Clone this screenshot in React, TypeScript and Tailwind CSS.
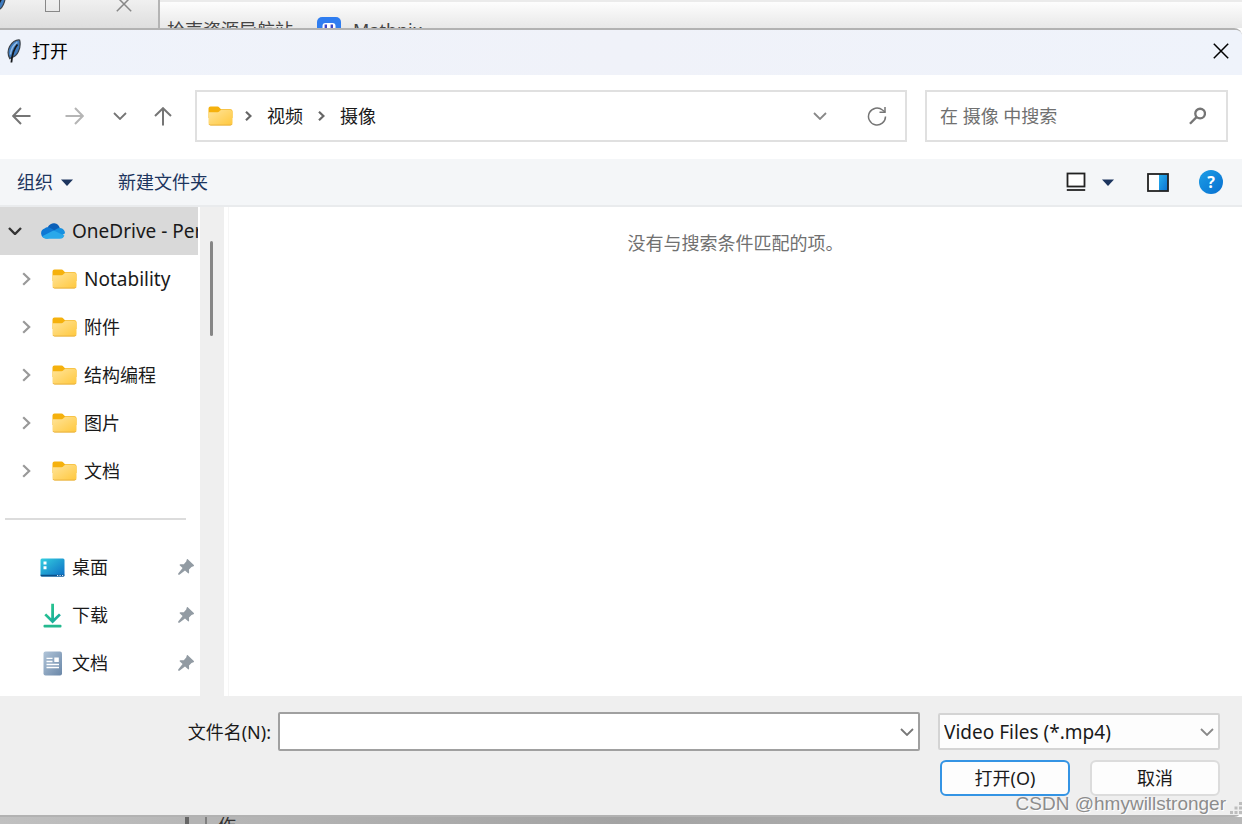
import React from 'react';

type IconProps = { className?: string };

const Feather: React.FC<IconProps> = ({ className = '' }) => (
  <svg width="14" height="24" viewBox="0 0 14 24" className={className} aria-hidden="true">
    <path
      d="M12.600 1C9 .6 5 3.600 2.600 7.500 .6 11.500.8 16 2.800 19.600L4.600 18.600c3-.6 5.400-2.800 6.800-6C13 9 13.600 4.500 12.600 1z"
      fill="#3f7cc0"
      stroke="#3a4048"
      strokeWidth="1.200"
    />
    <path d="M10.300 3.200C6.500 6 4 10.500 3.400 15.500" fill="none" stroke="#8fb9e4" strokeWidth="1.500" />
    <path d="M10.500 5.500C7.500 9 5.200 14 4.400 23.500" fill="none" stroke="#15181c" strokeWidth="1.800" />
  </svg>
);

const Cross: React.FC<IconProps> = ({ className = '' }) => (
  <svg width="16" height="16" viewBox="0 0 16 16" className={className} aria-hidden="true">
    <path d="M.8.8l14.400 14.400M15.200.8L.8 15.200" fill="none" stroke="currentColor" strokeWidth="1.500" />
  </svg>
);

const ChevronDown: React.FC<IconProps & { strokeWidth?: number }> = ({ className = '', strokeWidth = 1.8 }) => (
  <svg width="14" height="8" viewBox="0 0 14 8" className={className} aria-hidden="true">
    <path d="M1 1l6 6 6-6" fill="none" stroke="currentColor" strokeWidth={strokeWidth} />
  </svg>
);

const ChevronRight: React.FC<IconProps> = ({ className = '' }) => (
  <svg width="9" height="14" viewBox="0 0 9 14" className={className} aria-hidden="true">
    <path d="M1.200 1.200L7.200 7l-6 5.800" fill="none" stroke="currentColor" strokeWidth="2.200" />
  </svg>
);

const CrumbArrow: React.FC<IconProps> = ({ className = '' }) => (
  <svg width="7" height="10" viewBox="0 0 7 10" className={className} aria-hidden="true">
    <path d="M1 .8L5.400 5 1 9.200" fill="none" stroke="#666" strokeWidth="2.200" />
  </svg>
);

const Caret: React.FC = () => (
  <svg width="12" height="7" viewBox="0 0 12 7" aria-hidden="true">
    <path d="M0 .5h12L6 7z" fill="#1c355e" />
  </svg>
);

const Folder: React.FC<IconProps> = ({ className = '' }) => (
  <svg width="25" height="20" viewBox="0 0 25 20" className={className} aria-hidden="true">
    <defs>
      <linearGradient id="folderFront" x1="0" y1="0" x2="1" y2="1">
        <stop offset="0" stopColor="#ffe49a" />
        <stop offset="1" stopColor="#ffc83d" />
      </linearGradient>
    </defs>
    <path d="M.5 2.500a2 2 0 012-2H9.500c.8 0 1.300.3 1.800.9L13 3.200h9.500a2 2 0 012 2V12H.5z" fill="#f5b10d" />
    <path
      d="M.5 6.200h9c.8 0 1.200-.3 1.700-.8l.8-.8c.4-.4.8-.6 1.400-.6h9.100a2 2 0 012 2v11.200a2 2 0 01-2 2h-20a2 2 0 01-2-2z"
      fill="url(#folderFront)"
    />
    <path d="M1 18.200a2 2 0 001.500.9h20a2 2 0 001.500-.9" fill="none" stroke="#e8b03c" strokeWidth="1" />
  </svg>
);

const Cloud: React.FC = () => (
  <svg width="24" height="16" viewBox="0 0 24 16" aria-hidden="true">
    <path d="M6.500 4.500C8.500.8 11.500 0 13.500.3c2.700.4 4.600 2.200 5.300 4.600L14.500 9z" fill="#0a5fb8" />
    <path d="M5.200 15.500A5.200 5.200 0 013.600 5.400C5 4.200 7.400 3.800 9.400 4.900L17 9.500 7 15.500z" fill="#0f78d4" />
    <path d="M11.500 8.500l4-2.600c1-.7 2.300-1.100 3.600-1 2.800.3 4.900 2.500 4.900 5.300L20 13z" fill="#1690e0" />
    <path d="M1.200 13.300L11.500 8c.8-.4 1.500-.4 2.300 0l9.600 4.400c-.6 2-2.200 3.300-4.400 3.300H5.200c-1.700 0-3.200-1-4-2.400z" fill="#29a8ea" />
  </svg>
);

const Desktop: React.FC = () => (
  <svg width="25" height="19" viewBox="0 0 25 19" aria-hidden="true">
    <defs>
      <linearGradient id="desk" x1="0" y1="0" x2="1" y2="1">
        <stop offset="0" stopColor="#34cfe0" />
        <stop offset="1" stopColor="#0c6cc4" />
      </linearGradient>
    </defs>
    <rect x=".5" y=".5" width="24" height="18" rx="1.500" fill="url(#desk)" />
    <path d="M.5 16.800h24v.2a1.500 1.500 0 01-1.500 1.500H2a1.500 1.500 0 01-1.500-1.500z" fill="#0b4f88" />
    <path d="M3.500 3.500h3v3h-3zM3.500 8.200h3v3h-3z" fill="#fff" />
    <path d="M17 17h1.200v1H17zM19.500 17h1.200v1h-1.200zM22 17h1.200v1H22z" fill="#d8ecfb" />
  </svg>
);

const Download: React.FC = () => (
  <svg width="25" height="25" viewBox="0 0 25 25" aria-hidden="true">
    <defs>
      <linearGradient id="down" x1="0" y1="0" x2="1" y2="1">
        <stop offset="0" stopColor="#2fce8a" />
        <stop offset="1" stopColor="#12a3a0" />
      </linearGradient>
    </defs>
    <path d="M11.200.8h2.800v14.400l5-4.800 1.900 1.900-8.300 8.200-8.300-8.200 1.900-1.900 5 4.800z" fill="url(#down)" />
    <rect x="3.500" y="21.800" width="18" height="2.800" rx="1" fill="#24b98f" />
  </svg>
);

const Document: React.FC = () => (
  <svg width="25" height="25" viewBox="0 0 25 25" aria-hidden="true">
    <defs>
      <linearGradient id="docFill" x1="0" y1="0" x2="1" y2="1">
        <stop offset="0" stopColor="#b0c4d8" />
        <stop offset="1" stopColor="#6a87a8" />
      </linearGradient>
    </defs>
    <rect x="3.500" y=".5" width="18.500" height="24" rx="2" fill="url(#docFill)" />
    <path d="M6.500 7.400h6M6.500 10.500h6M6.500 13.500h12.500M6.500 16.500h12.500" stroke="#fff" strokeWidth="1.300" />
    <rect x="14.300" y="6.500" width="4.500" height="4.500" fill="#fff" />
  </svg>
);

const Pin: React.FC = () => (
  <svg width="16" height="16" viewBox="0 0 16 16" className="text-[#929ba3]" aria-hidden="true">
    <path
      d="M9.800.3L15.800 6c.4.5.2 1-.3 1.200l-2 .8-2.500 2.500.1 3c0 .8-.7 1.200-1.300.6l-2.800-2.600L1.400 15.800H.2v-1.200l4.400-5.500L1.900 6.600c-.6-.6-.2-1.300.5-1.300l3.400-.1 2.400-2.600.5-1.900c.1-.7.7-.9 1.100-.4z"
      fill="currentColor"
    />
  </svg>
);

const folders = ['Notability', '附件', '结构编程', '图片', '文档'];

const pinned = [
  { label: '桌面', icon: Desktop },
  { label: '下载', icon: Download },
  { label: '文档', icon: Document },
];

const BackgroundTop: React.FC = () => (
  <div className="flex h-7 overflow-hidden bg-linear-to-b from-white to-[#e8e8e8]">
    <div className="flex w-40 shrink-0 border-r-2 border-[#b4b4b4] bg-linear-to-b from-[#f0f0f0] to-[#dedede] text-[#888]">
      <Feather className="-mt-2 -ml-2 shrink-0" />
      <div className="ml-[39px] h-3 w-[15px] border border-t-0 border-[#888]" />
      <Cross className="-mt-1 ml-14" />
    </div>
    <div className="flex grow items-start border-t-2 border-[#ebebeb] pl-[7px] text-[#444]">
      <span className="mt-4 leading-6 whitespace-nowrap">拾壳资源导航站</span>
      <svg width="24" height="24" viewBox="0 0 24 24" className="mt-[15px] ml-6 shrink-0" aria-hidden="true">
        <rect width="24" height="24" rx="5" fill="#2f7df0" />
        <path d="M5.500 20V9a3 3 0 013-3h7a3 3 0 013 3V20z" fill="#fff" />
        <path d="M8.800 7.500V20M14.800 7.500V20" stroke="#3b47c9" strokeWidth="2.400" />
        <path d="M11.800 7.500V20" stroke="#fff" strokeWidth="2" />
      </svg>
      <span className="mt-4 ml-3 leading-6">Mathpix</span>
    </div>
  </div>
);

const TitleBar: React.FC = () => (
  <header className="flex h-[45px] items-center rounded-tr-md bg-linear-to-r from-[#eff3fb] via-[#f0f2f9] to-[#eff3fb] pr-[13px] pb-[3px] pl-[7px]">
    <Feather />
    <h1 className="ml-[11px] leading-6 text-black">打开</h1>
    <button type="button" aria-label="关闭" className="ml-auto text-black">
      <Cross />
    </button>
  </header>
);

const NavBar: React.FC = () => (
  <nav className="flex items-center pt-[15px] pr-[14px] pb-[17px] pl-3">
    <button type="button" aria-label="后退" className="text-[#757575]">
      <svg width="19" height="18" viewBox="0 0 19 18" aria-hidden="true">
        <path d="M18.500 9H1.500M9 1L1.200 9 9 17" fill="none" stroke="currentColor" strokeWidth="2" />
      </svg>
    </button>
    <button type="button" aria-label="前进" className="ml-[34px] text-[#b5b5b5]">
      <svg width="19" height="18" viewBox="0 0 19 18" aria-hidden="true">
        <path d="M.5 9h17M10 1l7.800 8L10 17" fill="none" stroke="currentColor" strokeWidth="2" />
      </svg>
    </button>
    <button type="button" aria-label="最近位置" className="ml-[29px] text-[#757575]">
      <ChevronDown />
    </button>
    <button type="button" aria-label="上移" className="ml-[27px] text-[#757575]">
      <svg width="18" height="19" viewBox="0 0 18 19" aria-hidden="true">
        <path d="M9 18.500V1.500M1 9l8-7.800L17 9" fill="none" stroke="currentColor" strokeWidth="2" />
      </svg>
    </button>
    <div className="ml-[23px] flex h-[52px] grow items-center border-2 border-[#e0e0e0] pr-[18px] pl-[11px] text-[#1a1a1a]">
      <Folder />
      <CrumbArrow className="ml-3" />
      <button type="button" className="ml-[15px] leading-6">视频</button>
      <CrumbArrow className="ml-[15px]" />
      <button type="button" className="ml-[15px] leading-6">摄像</button>
      <button type="button" aria-label="历史记录" className="ml-auto text-[#888]">
        <ChevronDown />
      </button>
      <button type="button" aria-label="刷新" className="ml-10 text-[#757575]">
        <svg width="20" height="20" viewBox="0 0 20 20" aria-hidden="true">
          <path d="M18.500 10.500a8.500 8.500 0 11-3-6.500L18 6" fill="none" stroke="currentColor" strokeWidth="1.500" />
          <path d="M18 1v5.300h-5.500" fill="none" stroke="currentColor" strokeWidth="1.500" />
        </svg>
      </button>
    </div>
    <label className="ml-[18px] flex h-[52px] w-[303px] items-center border-2 border-[#e0e0e0] pr-5 pl-[13px]">
      <input
        type="search"
        aria-label="搜索"
        placeholder="在 摄像 中搜索"
        className="min-w-0 grow leading-6 outline-none placeholder:text-[#707070]"
      />
      <svg width="18" height="18" viewBox="0 0 18 18" aria-hidden="true">
        <circle cx="11.500" cy="6.500" r="5" fill="none" stroke="#757575" strokeWidth="2.400" />
        <path d="M7.800 10.200L1 17" stroke="#757575" strokeWidth="2.400" />
      </svg>
    </label>
  </nav>
);

const Toolbar: React.FC = () => (
  <div className="flex h-12 items-center border-b-2 border-[#e9ebed] bg-[#f4f6f8] pr-[19px] pl-[17px] text-[#1c355e]">
    <button type="button" className="flex items-center gap-2 leading-6">
      组织
      <Caret />
    </button>
    <button type="button" className="ml-[45px] leading-6">新建文件夹</button>
    <button type="button" aria-label="更改视图" className="ml-auto flex items-center gap-4">
      <svg width="20" height="20" viewBox="0 0 20 20" aria-hidden="true">
        <rect x="1.500" y="1.500" width="17" height="13" fill="#fff" stroke="#222" strokeWidth="1.800" />
        <path d="M.8 18h18.400" stroke="#222" strokeWidth="1.800" />
      </svg>
      <Caret />
    </button>
    <button type="button" aria-label="预览窗格" className="ml-[33px]">
      <svg width="22" height="19" viewBox="0 0 22 19" aria-hidden="true">
        <defs>
          <linearGradient id="pane" x1="0" y1="0" x2="1" y2="1">
            <stop offset="0" stopColor="#27b0ee" />
            <stop offset="1" stopColor="#0a6fd0" />
          </linearGradient>
        </defs>
        <rect x="1" y="1" width="20" height="17" fill="#fff" />
        <rect x="12" y="1" width="9" height="17" fill="url(#pane)" />
        <rect x="1" y="1" width="20" height="17" fill="none" stroke="#222" strokeWidth="1.800" />
      </svg>
    </button>
    <button
      type="button"
      aria-label="帮助"
      className="ml-[30px] h-6 w-6 rounded-full bg-linear-to-br from-[#1d9ee6] to-[#0a6fd0] text-base leading-6 font-bold text-white"
    >
      ?
    </button>
  </div>
);

const Sidebar: React.FC = () => (
  <aside className="w-50 shrink-0 pb-[9px] text-[#1a1a1a]">
    <div className="mr-[2px] flex h-12 items-center overflow-hidden bg-[#d9d9d9] pl-2 whitespace-nowrap">
      <ChevronDown className="shrink-0 text-[#333]" strokeWidth={2.4} />
      <span className="ml-[19px] shrink-0">
        <Cloud />
      </span>
      <span className="ml-[7px] text-[19px] leading-6">OneDrive - Personal</span>
    </div>
    <ul>
      {folders.map((name, i) => (
        <li key={name} className="flex h-12 items-center pl-[22px]">
          <ChevronRight className="text-[#999]" />
          <Folder className="ml-[21px]" />
          <span className={`ml-[7px] leading-6 ${i === 0 ? 'text-[19px]' : ''}`}>{name}</span>
        </li>
      ))}
    </ul>
    <div className="flex h-12 items-center pr-[14px] pl-[5px]">
      <hr className="grow border-t-2 border-[#dcdcdc]" />
    </div>
    <ul>
      {pinned.map(({ label, icon: Icon }) => (
        <li key={label} className="flex h-12 items-center pr-[6px] pl-10">
          <Icon />
          <span className="ml-[7px] grow leading-6">{label}</span>
          <Pin />
        </li>
      ))}
    </ul>
  </aside>
);

const Footer: React.FC = () => (
  <footer className="bg-[#efefef] pt-4 pr-[22px] pb-[19px] text-[#1a1a1a]">
    <div className="flex items-center">
      <label htmlFor="filename" className="w-[271px] shrink-0 text-right leading-6">
        文件名(N):
      </label>
      <div className="ml-[7px] flex h-[39px] grow items-center rounded-xs border-2 border-[#a0a0a0] bg-white pr-1 pl-2">
        <input id="filename" type="text" className="min-w-0 grow leading-6 outline-none" />
        <button type="button" aria-label="展开" className="text-[#777]">
          <ChevronDown />
        </button>
      </div>
      <div className="relative ml-[18px] w-[282px] shrink-0">
        <select
          aria-label="文件类型"
          className="h-[37px] w-full appearance-none rounded-xs border-2 border-[#d4d4d4] bg-[#fdfdfd] pl-1 text-[19px] leading-6"
        >
          <option>Video Files (*.mp4)</option>
        </select>
        <ChevronDown className="pointer-events-none absolute top-[15px] right-[6px] text-[#888]" />
      </div>
    </div>
    <div className="mt-[9px] flex justify-end gap-5">
      <button type="button" className="h-9 w-[130px] rounded-md border-2 border-[#3494e4] bg-[#fdfdfd] leading-6">
        打开(O)
      </button>
      <button type="button" className="h-9 w-[130px] rounded-md border-2 border-[#dcdcdc] bg-[#fdfdfd] leading-6">
        取消
      </button>
    </div>
  </footer>
);

const BackgroundBottom: React.FC = () => (
  <div className="flex h-[7px] overflow-hidden bg-linear-to-r from-[#c0c0c0] via-[#a3a3a3] to-[#b8b8b8] text-[#333]">
    <div className="w-[189px] shrink-0 border-r-4 border-[#666]" />
    <div className="w-[18px] shrink-0 border-r-2 border-[#808080] bg-[#b4b4b4]" />
    <span className="-mt-1 ml-[11px] leading-6">作</span>
  </div>
);

const App: React.FC = () => {
  return (
    <div className="relative overflow-hidden bg-white font-['Noto_Sans','Noto_Sans_CJK_SC',sans-serif] text-[18px]">
      <BackgroundTop />
      <main className="rounded-r-lg border-y-2 border-[#b2b2b2]">
        <TitleBar />
        <NavBar />
        <Toolbar />
        <div className="flex">
          <Sidebar />
          <div className="w-6 shrink-0 bg-[#efefef] pt-[34px] pl-[10px]">
            <div className="h-[95px] w-[3px] rounded-full bg-[#868686]" />
          </div>
          <section className="ml-1 grow border-l border-[#f6f6f6] pt-6 text-center">
            <p className="leading-6 text-[#707070]">没有与搜索条件匹配的项。</p>
          </section>
        </div>
        <Footer />
      </main>
      <BackgroundBottom />
      <svg width="12" height="12" viewBox="0 0 12 12" className="absolute right-0 bottom-[10px]" aria-hidden="true">
        <path d="M9 0h3v3H9zM4.500 4.500h3v3h-3zM9 4.500h3v3H9zM0 9h3v3H0zM4.500 9h3v3h-3zM9 9h3v3H9z" fill="#bdbdbd" />
      </svg>
      <p className="absolute right-4 bottom-2 font-['Liberation_Sans',sans-serif] text-[19px] leading-6 text-[#8c8c8c] text-shadow-[1px_1px_0_#fff]">
        CSDN @hmywillstronger
      </p>
    </div>
  );
};

export default App;
